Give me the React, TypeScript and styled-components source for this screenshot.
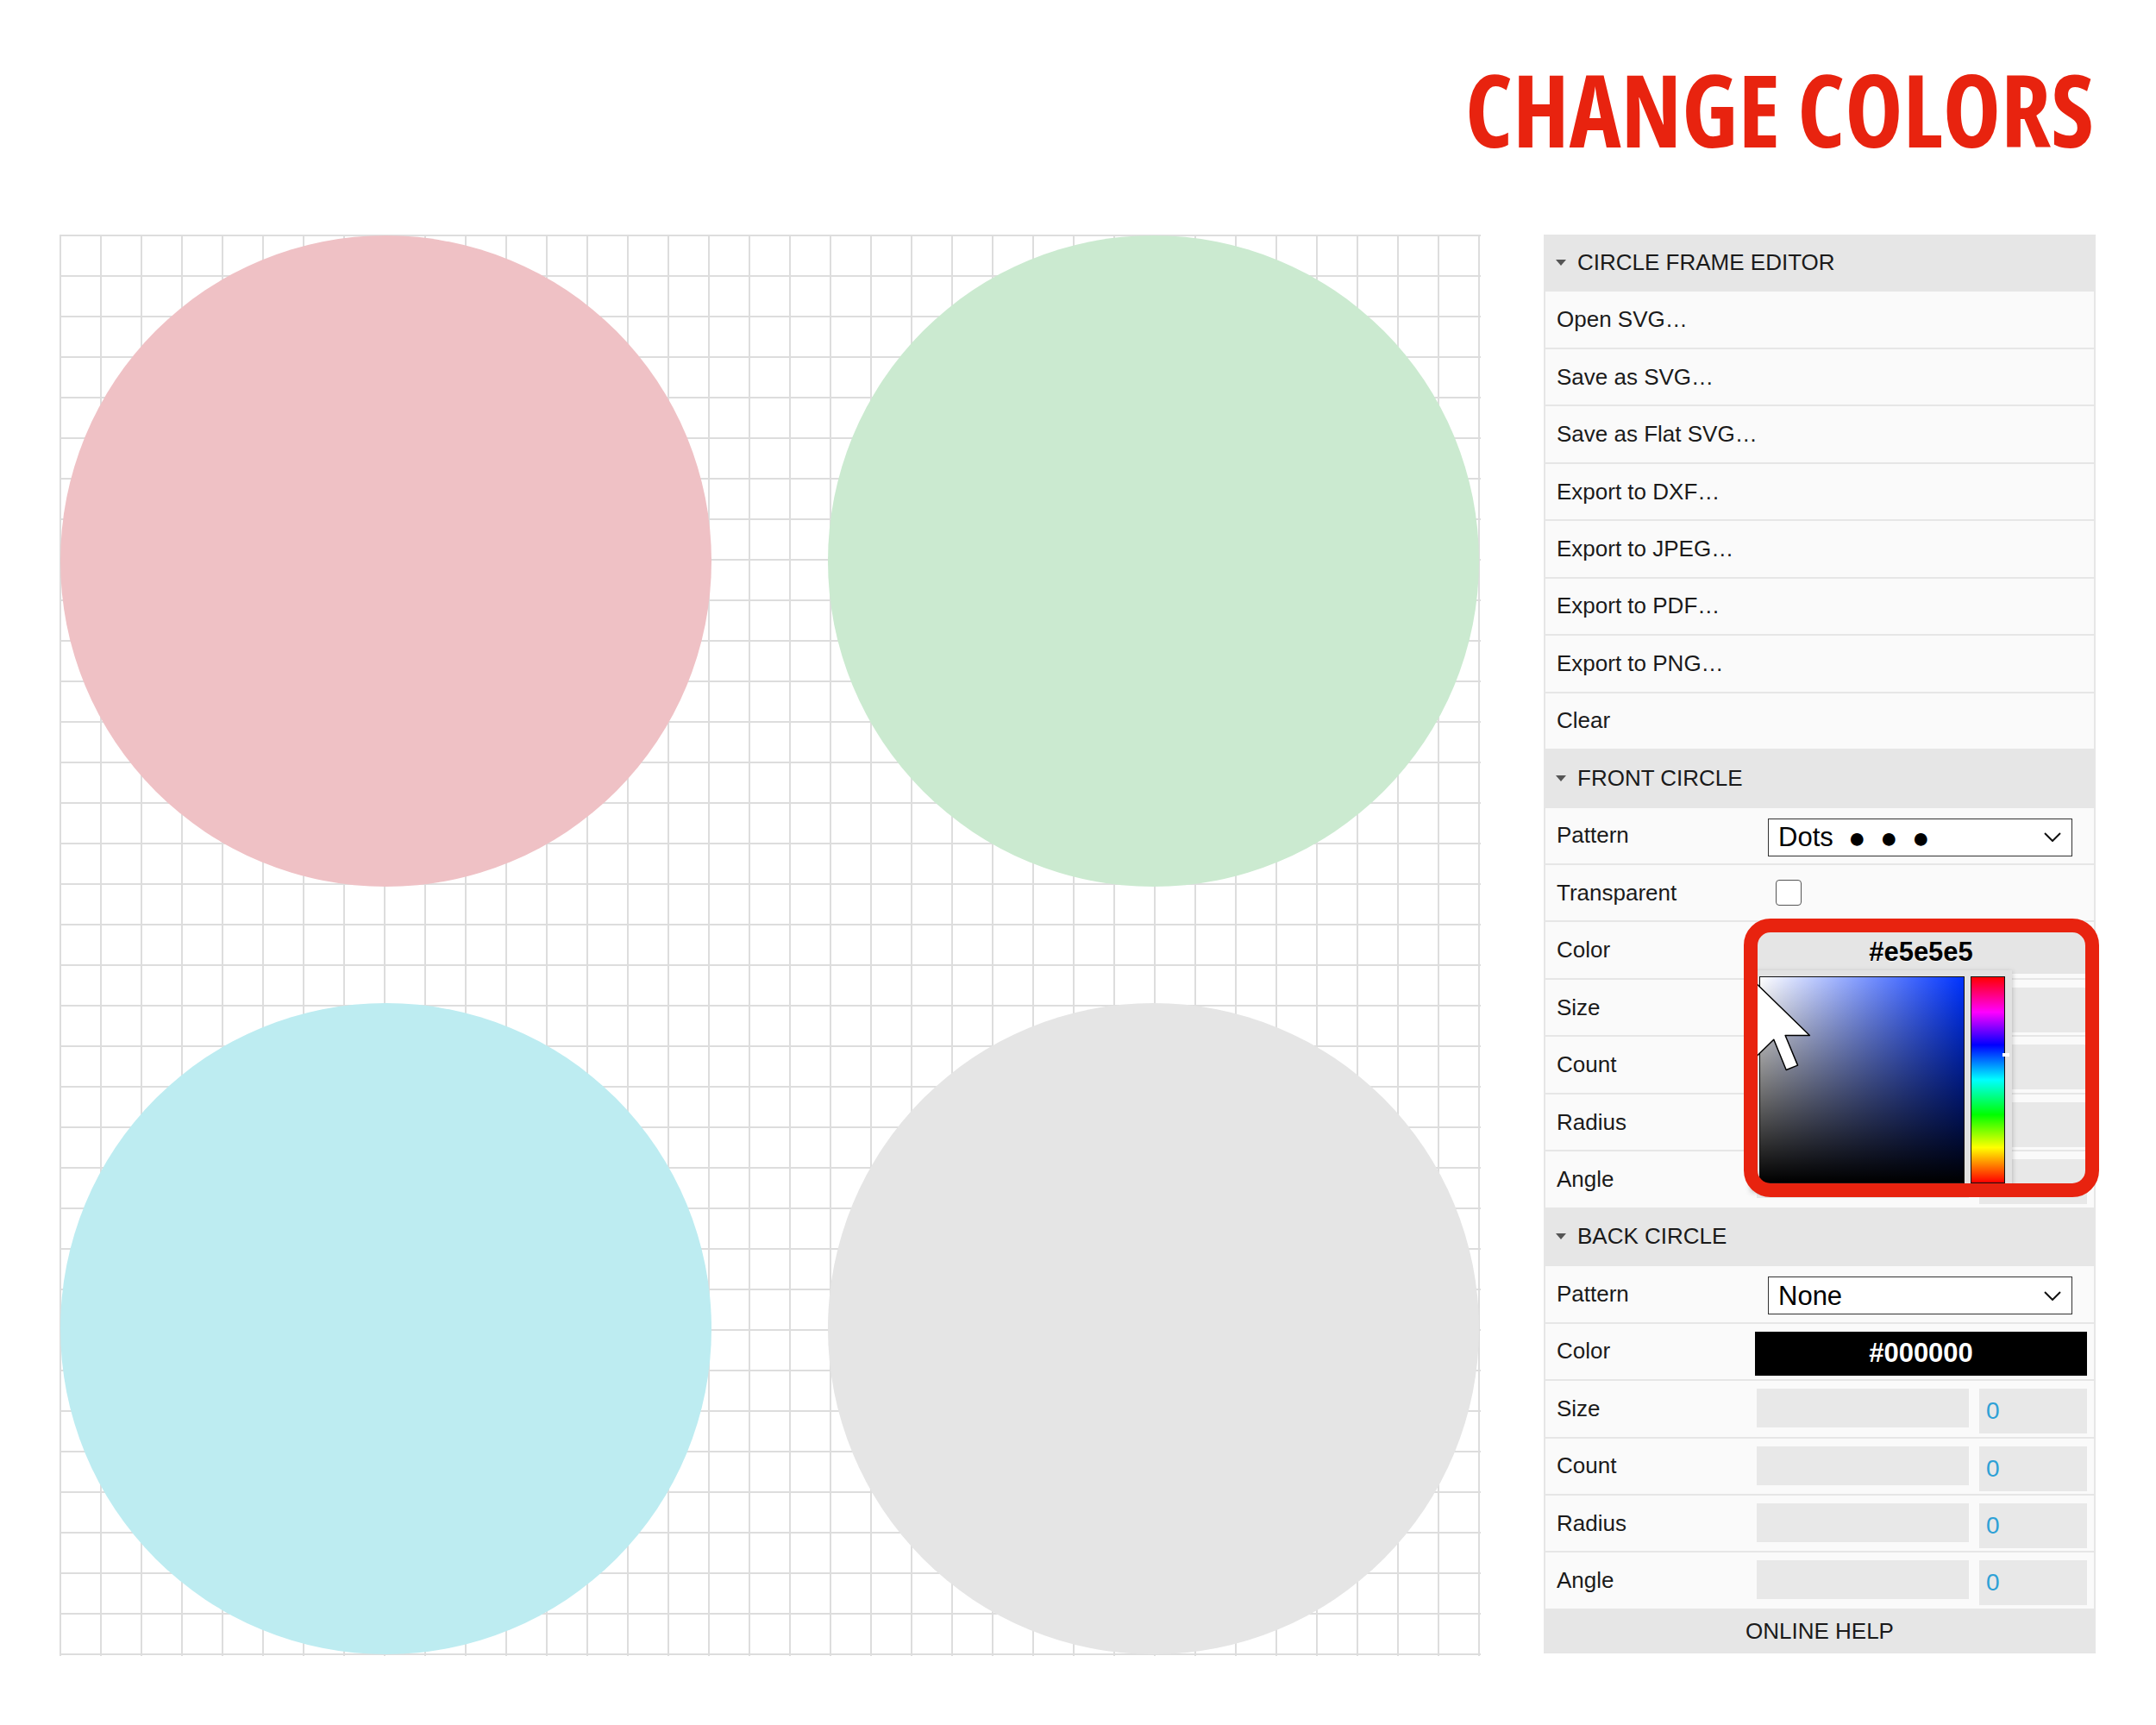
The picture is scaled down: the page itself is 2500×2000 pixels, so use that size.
import React, { useLayoutEffect, useRef, useState } from "react";
import styled, { createGlobalStyle } from "styled-components";

const GlobalStyle = createGlobalStyle`
  html, body { margin: 0; padding: 0; background: #fff; }
  body { font-family: "Liberation Sans", Arial, sans-serif; }
  * { box-sizing: border-box; }
`;

const Page = styled.div`
  width: 2500px;
  height: 2000px;
  background: #fff;
`;

const TitleBar = styled.header`
  height: 272px;
  display: flex;
  justify-content: flex-end;
  padding: 68px 72px 0 0;
`;

const Title = styled.h1`
  margin: 0;
  font-family: "Open Sans", "Liberation Sans", sans-serif;
  font-weight: 700;
  font-stretch: 75%;
  font-size: 116px;
  line-height: 1;
  color: #e8230f;
  white-space: nowrap;
  transform-origin: right top;
`;

const Main = styled.main`
  display: flex;
  align-items: flex-start;
  padding-left: 69px;
  gap: 73px;
`;

const Panel = styled.aside`
  width: 640px;
  background: #e6e6e6;
  display: flex;
  flex-direction: column;
  gap: 2px;
  font-family: "Liberation Sans", Arial, sans-serif;
  font-size: 26px;
  color: #1a1a1a;
`;

const SectionHeader = styled.div`
  height: 64.46px;
  display: flex;
  align-items: center;
  padding-left: 14px;
  gap: 13px;
  text-transform: uppercase;
`;

const ActionRow = styled.div`
  height: 64.46px;
  margin: 0 2px;
  background: #fafafa;
  display: flex;
  align-items: center;
  padding-left: 13px;
`;

const PropRow = styled(ActionRow)`
  align-items: stretch;
  padding-right: 8px;
`;

const Label = styled.div`
  width: 230px;
  flex: none;
  display: flex;
  align-items: center;
`;

const Control = styled.div<{ $top?: boolean }>`
  flex: 1;
  position: relative;
  display: flex;
  align-items: ${(p) => (p.$top ? "flex-start" : "center")};
  padding-top: ${(p) => (p.$top ? "9px" : "0")};
  gap: 12px;
`;

const Select = styled.div`
  margin: 4px 0 0 15px;
  width: 353px;
  height: 44px;
  border: 1px solid #333;
  background: #fff;
  display: flex;
  align-items: center;
  padding: 0 12px 0 11px;
  font-size: 31px;
  color: #000;
`;

const SelectText = styled.span`
  flex: 1;
  display: flex;
  align-items: center;
  line-height: 1;
`;

const Dot = styled.span`
  display: inline-block;
  width: 37px;
  text-align: center;
  font-size: 34px;
  line-height: 1;
  &:first-child {
    margin-left: 9px;
  }
`;

const Checkbox = styled.span`
  margin-left: 24px;
  width: 30px;
  height: 30px;
  border: 1.5px solid #555;
  border-radius: 4px;
  background: #fff;
`;

const Swatch = styled.div<{ $bg: string; $fg: string; $shadow: string }>`
  width: 100%;
  height: 51px;
  background: ${(p) => p.$bg};
  color: ${(p) => p.$fg};
  font-weight: 700;
  font-size: 31px;
  display: flex;
  align-items: center;
  justify-content: center;
  text-shadow: ${(p) => p.$shadow} 0 1px 1px;
`;

const Slider = styled.div`
  flex: 1;
  height: 45px;
  margin-left: 2px;
  background: #e8e8e8;
`;

const NumberBox = styled.div`
  width: 125px;
  height: 52px;
  background: #e8e8e8;
  color: #2fa1d6;
  font-size: 28px;
  padding-left: 8px;
  display: flex;
  align-items: center;
`;

const HelpRow = styled.div`
  height: 50px;
  display: flex;
  align-items: center;
  justify-content: center;
`;

const Picker = styled.div`
  position: absolute;
  left: -5px;
  top: 55.5px;
  width: 303px;
  height: 255px;
  padding: 7px 8px 0 10px;
  display: flex;
  gap: 7px;
  background: #e2e2e2;
  box-shadow: 0 2px 6px rgba(0, 0, 0, 0.25);
  z-index: 5;
`;

const SatField = styled.div<{ $hue: number }>`
  width: 238px;
  height: 240px;
  border: 1px solid #111;
  background: linear-gradient(to bottom, rgba(0, 0, 0, 0), #000),
    linear-gradient(to right, #fff, hsl(${(p) => p.$hue}, 100%, 50%));
`;

const HueField = styled.div`
  width: 40px;
  height: 240px;
  border: 1px solid #111;
  background: linear-gradient(
    to bottom,
    #f00 0%,
    #f0f 17%,
    #00f 33%,
    #0ff 50%,
    #0f0 67%,
    #ff0 83%,
    #f00 100%
  );
`;

const HueMarker = styled.span`
  position: absolute;
  left: 292px;
  top: 96px;
  width: 8px;
  height: 4px;
  background: #fff;
`;

const Knob = styled.span`
  position: absolute;
  left: 2px;
  top: 23px;
  width: 17px;
  height: 17px;
  border-radius: 50%;
  border: 2.5px solid #444;
  background: #e5e5e5;
`;

const CursorArt = styled.svg`
  position: absolute;
  left: 3px;
  top: 12px;
`;

const Annotation = styled.div`
  position: absolute;
  left: -13px;
  top: -4.5px;
  width: 412px;
  height: 323px;
  border: 16px solid #e8230f;
  border-radius: 31px;
  z-index: 10;
  pointer-events: none;
`;

const Triangle = () => (
  <svg width="12" height="7" viewBox="0 0 12 7">
    <polygon points="0,0 12,0 6,7" fill="#555" />
  </svg>
);

const Chevron = () => (
  <svg width="20" height="11" viewBox="0 0 20 11">
    <polyline points="1,1 10,10 19,1" fill="none" stroke="#111" strokeWidth="2" />
  </svg>
);

const GridCanvas = () => {
  const cell = 47;
  const n = 35;
  const size = cell * n + 3;
  const lines: React.ReactNode[] = [];
  for (let k = 0; k <= n; k++) {
    const p = 1 + k * cell;
    lines.push(<line key={"v" + k} x1={p} y1={0} x2={p} y2={size} />);
    lines.push(<line key={"h" + k} x1={0} y1={p} x2={size} y2={p} />);
  }
  const r = 377.5;
  const a = 1 + r;
  const b = 1 + n * cell - r;
  return (
    <svg width={size} height={size} viewBox={`0 0 ${size} ${size}`}>
      <g stroke="#dddddd" strokeWidth="2">{lines}</g>
      <circle cx={a} cy={a} r={r} fill="#efc1c5" />
      <circle cx={b} cy={a} r={r} fill="#cbead0" />
      <circle cx={a} cy={b} r={r} fill="#bdecf1" />
      <circle cx={b} cy={b} r={r} fill="#e5e5e5" />
    </svg>
  );
};

const actions = [
  "Open SVG…",
  "Save as SVG…",
  "Save as Flat SVG…",
  "Export to DXF…",
  "Export to JPEG…",
  "Export to PDF…",
  "Export to PNG…",
  "Clear",
];

const numericProps = ["Size", "Count", "Radius", "Angle"];

const NumericRow = ({ label, value }: { label: string; value?: string }) => (
  <PropRow>
    <Label>{label}</Label>
    <Control $top>
      <Slider />
      <NumberBox>{value}</NumberBox>
    </Control>
  </PropRow>
);

const ColorPicker = () => (
  <>
    <Picker>
      <SatField $hue={228} />
      <HueField />
      <HueMarker />
      <Knob />
      <CursorArt width="70" height="112" viewBox="0 0 13 21">
        <path
          d="M0.5 0.5 V16.6 L4.4 12.8 L7.1 19.4 L9.6 18.4 L6.9 11.9 H12.2 Z"
          fill="#fff"
          stroke="#000"
          strokeWidth="0.28"
          strokeLinejoin="round"
        />
      </CursorArt>
    </Picker>
    <Annotation />
  </>
);

export default function App() {
  const titleRef = useRef<HTMLHeadingElement>(null);
  const [scale, setScale] = useState(1);

  useLayoutEffect(() => {
    const measure = () => {
      const el = titleRef.current;
      if (!el) return;
      const w = el.scrollWidth;
      if (w > 0) setScale(729 / w);
    };
    measure();
    if (document.fonts && document.fonts.ready) document.fonts.ready.then(measure);
  }, []);

  return (
    <Page>
      <GlobalStyle />
      <TitleBar>
        <Title ref={titleRef} style={{ transform: `scaleX(${scale})` }}>
          CHANGE COLORS
        </Title>
      </TitleBar>
      <Main>
        <GridCanvas />
        <Panel>
          <SectionHeader>
            <Triangle />
            Circle Frame Editor
          </SectionHeader>
          {actions.map((a) => (
            <ActionRow key={a}>{a}</ActionRow>
          ))}
          <SectionHeader>
            <Triangle />
            Front Circle
          </SectionHeader>
          <PropRow>
            <Label>Pattern</Label>
            <Control>
              <Select>
                <SelectText>
                  Dots
                  <Dot>●</Dot>
                  <Dot>●</Dot>
                  <Dot>●</Dot>
                </SelectText>
                <Chevron />
              </Select>
            </Control>
          </PropRow>
          <PropRow>
            <Label>Transparent</Label>
            <Control>
              <Checkbox />
            </Control>
          </PropRow>
          <PropRow>
            <Label>Color</Label>
            <Control $top>
              <Swatch $bg="#e5e5e5" $fg="#000" $shadow="rgba(255,255,255,0.7)">
                #e5e5e5
              </Swatch>
              <ColorPicker />
            </Control>
          </PropRow>
          {numericProps.map((p) => (
            <NumericRow key={"f" + p} label={p} />
          ))}
          <SectionHeader>
            <Triangle />
            Back Circle
          </SectionHeader>
          <PropRow>
            <Label>Pattern</Label>
            <Control>
              <Select>
                <SelectText>None</SelectText>
                <Chevron />
              </Select>
            </Control>
          </PropRow>
          <PropRow>
            <Label>Color</Label>
            <Control $top>
              <Swatch $bg="#000000" $fg="#fff" $shadow="rgba(0,0,0,0.7)">
                #000000
              </Swatch>
            </Control>
          </PropRow>
          {numericProps.map((p) => (
            <NumericRow key={"b" + p} label={p} value="0" />
          ))}
          <HelpRow>ONLINE HELP</HelpRow>
        </Panel>
      </Main>
    </Page>
  );
}
